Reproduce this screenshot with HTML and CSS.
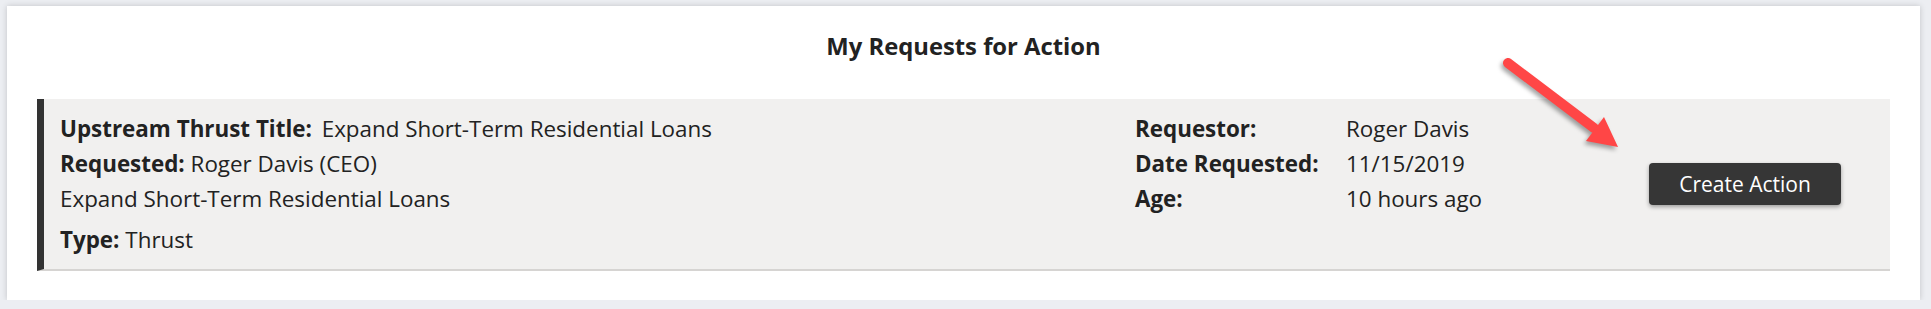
FILE: index.html
```html
<!DOCTYPE html>
<html>

<head>
    <meta name="viewport" content="width=device-width,initial-scale=1.0">
    <title>My Requests for Action</title>
    <link rel="stylesheet" href="styles.css">
</head>

<body>
    <div class="panel">
        <h2 class="panel-title">My Requests for Action</h2>

        <div class="request">
            <div class="request-info">
                <div class="line"><b class="label wide">Upstream Thrust Title:</b> Expand Short-Term Residential Loans</div>
                <div class="line"><b class="label">Requested:</b> Roger Davis (CEO)</div>
                <div class="line">Expand Short-Term Residential Loans</div>
                <div class="line type"><b class="label">Type:</b> Thrust</div>
            </div>
            <div class="request-meta">
                <b class="label">Requestor:</b>
                <span>Roger Davis</span>
                <b class="label">Date Requested:</b>
                <span>11/15/2019</span>
                <b class="label">Age:</b>
                <span>10 hours ago</span>
            </div>
            <div class="request-actions">
                <button class="action-button">Create Action</button>
            </div>
        </div>

        <!-- annotation arrow -->
        <svg class="arrow" width="150" height="120" viewBox="0 0 150 120">
            <line x1="18" y1="18" x2="104" y2="83" stroke="#ff4646" stroke-width="10" stroke-linecap="round" />
            <polygon points="114,72 96,96 128,102" fill="#ff4646" />
        </svg>
    </div>
</body>

</html>
```

FILE: styles.css
```css
body {
    margin: 0;
    padding: 0;
    font-family: "Open Sans", "Liberation Sans", Arial, sans-serif;
    background: #eceef2;
    color: #222;
}

.panel {
    position: relative;
    box-sizing: border-box;
    width: 1913px;
    height: 294px;
    margin: 6px 0 0 7px;
    padding: 24px 30px 0 30px;
    background: #fff;
    box-shadow: 0 0 6px rgba(0, 0, 0, 0.18);
}

.panel-title {
    margin: 0 0 37px 0;
    font-size: 23.8px;
    line-height: 32px;
    font-weight: bold;
    text-align: center;
    color: #222;
}

.request {
    display: flex;
    align-items: center;
    background: #f1f0ef;
    border-left: 7px solid #333;
    border-bottom: 2px solid #d6d4d2;
    padding: 12px 49px 12px 16px;
    font-size: 22.4px;
    line-height: 35px;
}

.request-info {
    flex: 1;
    align-self: flex-start;
}

.label {
    font-weight: bold;
}

.label.wide {
    margin-right: 4px;
}

.line.type {
    margin-top: 6px;
}

.request-meta {
    align-self: flex-start;
    width: 514px;
    display: grid;
    grid-template-columns: 211px auto;
}

.action-button {
    width: 192px;
    height: 42px;
    background: #363636;
    color: #fff;
    border: none;
    border-radius: 4px;
    font-family: inherit;
    font-size: 21px;
    box-shadow: 0 2px 4px rgba(0, 0, 0, 0.35);
    cursor: pointer;
}

.arrow {
    position: absolute;
    left: 1483px;
    top: 39px;
    filter: drop-shadow(-2px 3px 2px rgba(0, 0, 0, 0.35));
}
```
